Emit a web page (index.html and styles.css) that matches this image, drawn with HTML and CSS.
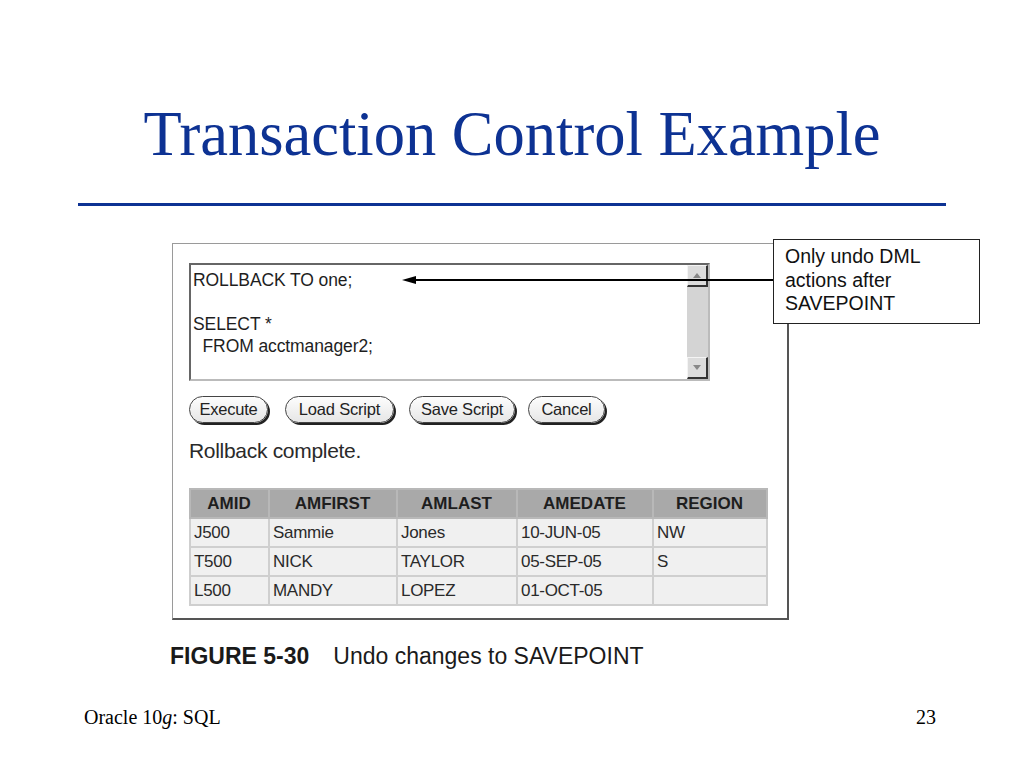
FILE: index.html
```html
<!DOCTYPE html>
<html>
<head>
<meta charset="utf-8">
<link rel="stylesheet" href="styles.css">
</head>
<body>
<div class="slide">
  <h1 class="title">Transaction Control Example</h1>
  <div class="rule"></div>
  <div class="figure">
    <div class="editor">
      <div class="code">ROLLBACK TO one;<br><br>SELECT *<br>&nbsp;&nbsp;FROM acctmanager2;</div>
      <div class="scrollbar">
        <div class="sbtn"><span class="tri up"></span></div>
        <div class="track"></div>
        <div class="sbtn"><span class="tri down"></span></div>
      </div>
    </div>
    <div class="buttons">
      <span class="btn b1">Execute</span>
      <span class="btn b2">Load Script</span>
      <span class="btn b3">Save Script</span>
      <span class="btn b4">Cancel</span>
    </div>
    <div class="status">Rollback complete.</div>
    <table class="result">
      <colgroup>
        <col class="c1"><col class="c2"><col class="c3"><col class="c4"><col class="c5">
      </colgroup>
      <tr><th>AMID</th><th>AMFIRST</th><th>AMLAST</th><th>AMEDATE</th><th>REGION</th></tr>
      <tr><td>J500</td><td>Sammie</td><td>Jones</td><td>10-JUN-05</td><td>NW</td></tr>
      <tr><td>T500</td><td>NICK</td><td>TAYLOR</td><td>05-SEP-05</td><td>S</td></tr>
      <tr><td>L500</td><td>MANDY</td><td>LOPEZ</td><td>01-OCT-05</td><td></td></tr>
    </table>
  </div>
  <div class="caption"><b>FIGURE 5-30</b><span class="ctext">Undo changes to SAVEPOINT</span></div>
  <div class="footer">
    <span>Oracle 10<i>g</i>: SQL</span>
    <span>23</span>
  </div>

  <svg class="arrow" width="380" height="14" viewBox="0 0 380 14">
    <line x1="12" y1="7" x2="380" y2="7" stroke="#000" stroke-width="2"/>
    <polygon points="0,7 14,3 14,11" fill="#000"/>
  </svg>
  <div class="callout">Only undo DML<br>actions after<br>SAVEPOINT</div>
</div>
</body>
</html>
```

FILE: styles.css
```css
html, body {
  margin: 0;
  padding: 0;
  background: #fff;
}
.slide {
  position: relative;
  width: 1024px;
  height: 768px;
  overflow: hidden;
  display: flex;
  flex-direction: column;
}
.title {
  margin: 99px 0 0 0;
  font-family: "Liberation Serif", "Times New Roman", serif;
  font-weight: normal;
  font-size: 62.5px;
  line-height: 70px;
  color: #0d3293;
  text-align: center;
}
.rule {
  margin: 34px 78px 0 78px;
  height: 3px;
  background: #0d3293;
}
.figure {
  margin: 37px 0 0 172px;
  width: 617px;
  height: 377px;
  box-sizing: border-box;
  border-top: 1px solid #9a9a9a;
  border-left: 1px solid #9a9a9a;
  border-right: 2px solid #555;
  border-bottom: 2px solid #555;
  padding: 19px 0 0 16px;
  font-family: "Liberation Sans", Arial, sans-serif;
  color: #1e1e1e;
}
.editor {
  width: 521px;
  height: 118px;
  box-sizing: border-box;
  border: 2px solid #666;
  border-right-color: #bbb;
  border-bottom-color: #bbb;
  display: flex;
  background: #fff;
}
.code {
  flex: 1;
  padding: 4px 0 0 2px;
  font-size: 17.5px;
  line-height: 22px;
  letter-spacing: -0.1px;
}
.scrollbar {
  width: 21px;
  display: flex;
  flex-direction: column;
  background: #d8d8d8;
}
.sbtn {
  height: 22px;
  box-sizing: border-box;
  background: #dcdcdc;
  border-top: 1px solid #f4f4f4;
  border-left: 1px solid #f4f4f4;
  border-right: 2px solid #333;
  border-bottom: 2px solid #333;
  display: flex;
  align-items: center;
  justify-content: center;
}
.track {
  flex: 1;
  background: #d4d4d4;
}
.tri {
  width: 0;
  height: 0;
  border-left: 4px solid transparent;
  border-right: 4px solid transparent;
}
.tri.up { border-bottom: 5px solid #888; }
.tri.down { border-top: 5px solid #888; }
.buttons {
  margin-top: 15px;
  display: flex;
  height: 27px;
}
.btn {
  box-sizing: border-box;
  height: 27px;
  border: 1px solid #444;
  border-radius: 14px;
  box-shadow: 2px 2px 0 #222;
  background: linear-gradient(#fdfdfd, #e6e6e6);
  font-size: 16.5px;
  line-height: 25px;
  text-align: center;
  letter-spacing: -0.2px;
  color: #222;
}
.b1 { width: 79px; }
.b2 { width: 109px; margin-left: 17px; }
.b3 { width: 106px; margin-left: 15px; }
.b4 { width: 77px; margin-left: 13px; }
.status {
  margin-top: 16px;
  font-size: 21px;
  line-height: 24px;
  letter-spacing: -0.3px;
  color: #2a2a2a;
}
.result {
  margin-top: 25px;
  width: 577px;
  border-collapse: collapse;
  table-layout: fixed;
  font-size: 17px;
  background: #f0f0f0;
}
.result col.c1 { width: 79px; }
.result col.c2 { width: 128px; }
.result col.c3 { width: 120px; }
.result col.c4 { width: 136px; }
.result col.c5 { width: 114px; }
.result th, .result td {
  height: 29px;
  box-sizing: border-box;
  padding: 0 4px 0 3px;
  border: 2px solid #cfcfcf;
}
.result th {
  background: #a9a9a9;
  color: #1e1e1e;
  font-weight: bold;
  text-align: center;
  border-color: #b8b8b8;
}
.result td {
  color: #2a2a2a;
  letter-spacing: -0.3px;
}
.caption {
  margin: 22px 0 0 170px;
  font-family: "Liberation Sans", Arial, sans-serif;
  font-size: 23px;
  line-height: 28px;
  color: #1a1a1a;
}
.caption b {
  font-weight: bold;
}
.ctext {
  margin-left: 24px;
}
.footer {
  margin: 36px 88px 0 84px;
  display: flex;
  justify-content: space-between;
  font-family: "Liberation Serif", "Times New Roman", serif;
  font-size: 20px;
  line-height: 22px;
  color: #000;
}
.arrow {
  position: absolute;
  left: 402px;
  top: 273px;
}
.callout {
  position: absolute;
  left: 773px;
  top: 239px;
  width: 207px;
  height: 85px;
  box-sizing: border-box;
  border: 1px solid #222;
  background: #fff;
  padding: 5px 0 0 11px;
  font-family: "Liberation Sans", Arial, sans-serif;
  font-size: 19.5px;
  line-height: 23.5px;
  color: #111;
}
```
